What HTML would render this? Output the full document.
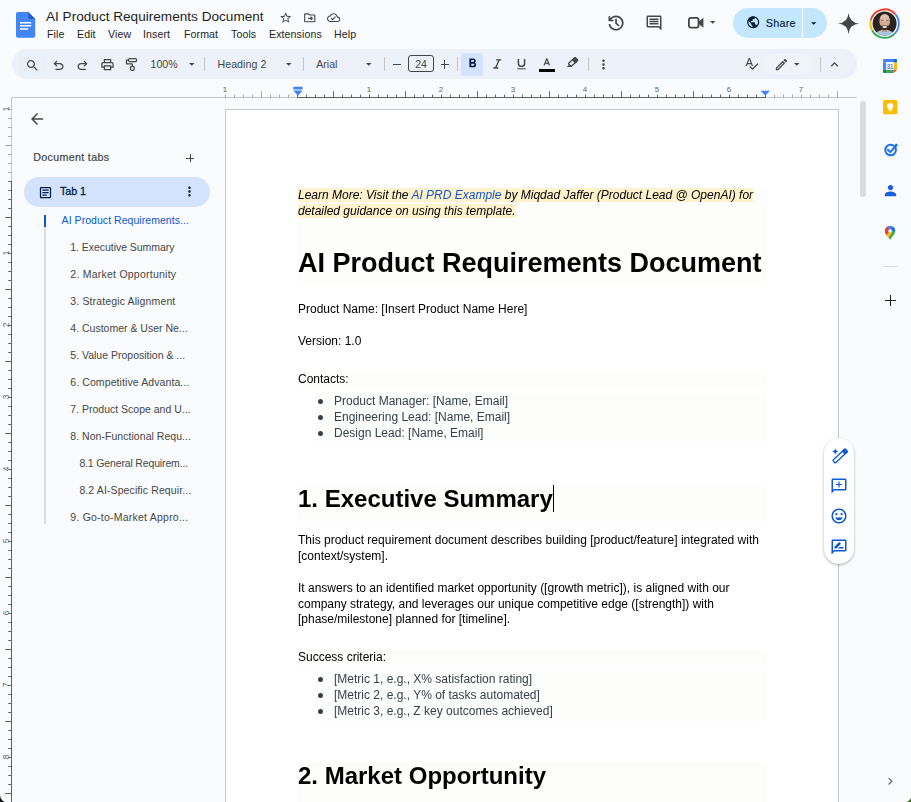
<!DOCTYPE html>
<html>
<head>
<meta charset="utf-8">
<title>AI Product Requirements Document</title>
<style>
*{box-sizing:border-box;margin:0;padding:0}
html,body{width:911px;height:802px;overflow:hidden;background:#f9fbfd;font-family:"Liberation Sans",sans-serif;color:#1f1f1f}
.abs{position:absolute}
#app{position:relative;width:911px;height:802px;overflow:hidden;background:#f9fbfd}
/* header */
#title{left:46px;top:8px;font-size:13.6px;line-height:18px;color:#1f1f1f;white-space:nowrap}
.menu{letter-spacing:.1px;top:27px;font-size:10.6px;line-height:14px;color:#1f1f1f;white-space:nowrap}
/* toolbar */
#tb{left:12px;top:48.800px;width:845px;height:30px;border-radius:15px;background:#edf2fa}
.tbt{font-size:10.6px;line-height:14px;top:57px;color:#444746;white-space:nowrap}
.sep{width:1px;height:15px;top:56px;background:#c7c7c7}
svg{position:absolute;overflow:visible}
.rn{top:85.300px;width:20px;text-align:center;font-size:7.900px;line-height:9px;color:#5f6368}
.vn{left:.500px;width:9px;height:10px;text-align:center;font-size:8.400px;line-height:10px;color:#5f6368;transform:rotate(-90deg)}
/* sidebar */
.ol{font-size:10.5px;line-height:14px;color:#444746;white-space:nowrap}
/* page */
#page{left:225px;top:109px;width:614px;height:700px;background:#fff;border:1px solid #c8c8c8}
#doc{position:absolute;left:0;top:0;width:911px;height:802px;will-change:transform}
.p{left:298px;font-size:12px;line-height:16px;color:#000;white-space:nowrap}
.li{left:334px;font-size:12px;line-height:16px;color:#35404f;white-space:nowrap}
.bul{left:317.5px;width:5px;height:5px;border-radius:50%;background:#35404f}
.fb{background:#fdfdfb}
.hl{background:#fff2cc}
.lk{color:#1155cc}
.h2{left:298px;font-size:24px;font-weight:700;line-height:30px;color:#000;white-space:nowrap}
</style>
</head>
<body>
<div id="app">

<!-- HEADER -->
<div id="hdr">
<svg style="left:16px;top:11.6px" width="19.2" height="25.7" viewBox="0 0 19.2 25.7"><path fill="#4285f4" d="M1.800 0H12.200L19.200 7V23.900a1.800 1.800 0 0 1-1.800 1.800H1.800A1.800 1.800 0 0 1 0 23.900V1.800A1.800 1.800 0 0 1 1.800 0z"/><path fill="#1a5fd0" d="M12.200 0L19.200 7H13.600a1.400 1.400 0 0 1-1.400-1.400z"/><path fill="#fff" d="M4 10.100h11.200v1.500H4zM4 13h11.200v1.500H4zM4 16.200h8.200v1.500H4z"/></svg>
<div id="title" class="abs">AI Product Requirements Document</div>
<svg style="left:278.8px;top:10.6px" width="13.5" height="13.5" viewBox="0 0 24 24"><path fill="#444746"  d="M22 9.24l-7.19-.62L12 2 9.19 8.63 2 9.24l5.46 4.73L5.82 21 12 17.27 18.18 21l-1.63-7.03L22 9.24zM12 15.4l-3.76 2.27 1-4.28-3.32-2.88 4.38-.38L12 6.1l1.71 4.04 4.38.38-3.32 2.88 1 4.28L12 15.4z"/></svg>
<svg style="left:302.6px;top:11.2px" width="13.5" height="13.5" viewBox="0 0 24 24"><path fill="#444746"  d="M20 6h-8l-2-2H4c-1.1 0-2 .9-2 2v12c0 1.1.9 2 2 2h16c1.1 0 2-.9 2-2V8c0-1.1-.9-2-2-2zm0 12H4V6h5.17l2 2H20v10zm-7.16-2.59L14.25 16.83 18 13l-3.75-3.83-1.41 1.42L14.25 12H9v2h5.25l-1.41 1.41z"/></svg>
<svg style="left:327px;top:11px" width="13.3" height="13.3" viewBox="0 0 24 24"><path fill="#444746"  d="M19.35 10.04C18.67 6.59 15.64 4 12 4 9.11 4 6.6 5.64 5.35 8.04 2.34 8.36 0 10.91 0 14c0 3.31 2.69 6 6 6h13c2.76 0 5-2.24 5-5 0-2.64-2.05-4.78-4.65-4.96zM19 18H6c-2.21 0-4-1.79-4-4 0-2.05 1.53-3.76 3.56-3.97l1.07-.11.5-.95C8.08 7.14 9.94 6 12 6c2.62 0 4.88 1.86 5.39 4.43l.3 1.5 1.53.11c1.56.1 2.78 1.41 2.78 2.96 0 1.65-1.35 3-3 3zm-9-3.82l-2.09-2.09L6.5 13.5 10 17l6.01-6.01-1.41-1.41z"/></svg>
<div class="abs menu" style="left:47px">File</div>
<div class="abs menu" style="left:77px">Edit</div>
<div class="abs menu" style="left:108px">View</div>
<div class="abs menu" style="left:143px">Insert</div>
<div class="abs menu" style="left:184px">Format</div>
<div class="abs menu" style="left:231px">Tools</div>
<div class="abs menu" style="left:269px">Extensions</div>
<div class="abs menu" style="left:334px">Help</div>
<svg style="left:606.300px;top:12.800px" width="20.100" height="20.100" viewBox="0 0 24 24"><path fill="#444746" d="M12 21q-3.450 0-6.013-2.287Q3.425 16.425 3.050 13H5.100q.350 2.600 2.313 4.300Q9.375 19 12 19q2.925 0 4.963-2.037Q19 14.925 19 12t-2.037-4.963Q14.925 5 12 5q-1.725 0-3.225.800-1.500.800-2.525 2.200H9v2H3V4h2v2.350q1.275-1.600 3.113-2.475Q9.950 3 12 3q1.875 0 3.513.713 1.637.712 2.850 1.925 1.212 1.212 1.925 2.850Q21 10.125 21 12t-.712 3.512q-.713 1.638-1.925 2.850-1.213 1.213-2.850 1.926Q13.875 21 12 21Zm2.800-4.800L11 12.400V7h2v4.600l3.200 3.200Z"/></svg>
<svg style="left:644.6px;top:13.8px" width="18" height="18" viewBox="0 0 24 24"><path fill="#444746"  d="M21.990 4c0-1.100-.890-2-1.990-2H4c-1.100 0-2 .900-2 2v12c0 1.100.900 2 2 2h14l4 4-.010-18zM20 4v13.170L18.830 16H4V4h16zM6 12h12v2H6zm0-3h12v2H6zm0-3h12v2H6z"/></svg>
<svg style="left:687.9px;top:16.6px" width="15.4" height="11.5" viewBox="0 0 15.4 11.5"><rect x=".9" y=".9" width="9.600" height="9.700" rx="1.800" fill="none" stroke="#444746" stroke-width="1.800"/><path fill="#444746" d="M10.800 4.600L15.400 .800V10.700L10.800 6.900z"/></svg>
<svg style="left:710.3px;top:20.7px" width="5.4" height="2.800" viewBox="0 0 10 5"><path fill="#444746" d="M0 0h10L5 5z"/></svg>
<div class="abs" style="left:732.8px;top:7.8px;width:94.3px;height:30px;border-radius:15px;background:#c2e7ff"></div>
<div class="abs" style="left:801.8px;top:7.8px;width:1px;height:30px;background:#f9fbfd"></div>
<svg style="left:746.2px;top:14.8px" width="14.4" height="14.4" viewBox="0 0 24 24"><path fill="#001d35"  d="M12 2C6.480 2 2 6.480 2 12s4.480 10 10 10 10-4.480 10-10S17.520 2 12 2zm-1 17.930c-3.950-.490-7-3.850-7-7.930 0-.620.080-1.210.210-1.790L9 15v1c0 1.100.900 2 2 2v1.930zm6.900-2.540c-.260-.810-1-1.390-1.900-1.390h-1v-3c0-.550-.450-1-1-1H8v-2h2c.550 0 1-.450 1-1V7h2c1.100 0 2-.900 2-2v-.410c2.930 1.190 5 4.060 5 7.410 0 2.080-.800 3.970-2.100 5.390z"/></svg>
<div class="abs" id="share" style="left:765.8px;top:15.5px;font-size:10.8px;line-height:14px;color:#001d35;letter-spacing:.25px;-webkit-text-stroke:.12px #001d35;white-space:nowrap">Share</div>
<svg style="left:811.2px;top:21.8px" width="5.4" height="3" viewBox="0 0 10 5"><path fill="#001d35" d="M0 0h10L5 5z"/></svg>
<svg style="left:837.900px;top:12.800px" width="21.200" height="21.200" viewBox="-10.600 -10.600 21.200 21.200"><path fill="#444746" d="M0-10.600Q.900-.900 10.600 0Q.900 .900 0 10.600Q-.900 .900-10.600 0Q-.900-.900 0-10.600z"/><circle r="2.700" fill="#444746"/></svg>
<svg style="left:868.900px;top:7.700px" width="31.200" height="31.200" viewBox="-15.600 -15.600 31.200 31.200">
<g fill="none" stroke-width="1.800">
<path stroke="#ea4335" d="M-13.94 -2.96A14.25 14.25 0 0 1 10.92 -9.16"/>
<path stroke="#4285f4" d="M10.92 -9.16A14.25 14.25 0 0 1 9.72 10.42"/>
<path stroke="#34a853" d="M9.72 10.42A14.25 14.25 0 0 1 -12.58 6.69"/>
<path stroke="#fbbc04" d="M-12.58 6.69A14.25 14.25 0 0 1 -13.94 -2.96"/>
</g>
<circle r="12" fill="#2a2422"/>
<clipPath id="avc"><circle r="12"/></clipPath>
<g clip-path="url(#avc)">
<path d="M-9.500 12.500C-8.500 7.500-4 6.200 0 6.200S8.500 7.500 9.500 12.500z" fill="#a9c4e3"/>
<path d="M-2.600 4h5.200v4.200h-5.200z" fill="#b98a72"/>
<ellipse cx=".100" cy="-2.200" rx="5.300" ry="7.300" fill="#d4aa92"/>
<ellipse cx=".100" cy="-5.600" rx="4.300" ry="3.600" fill="#e2bfa8"/>
<path d="M-5.100 0.300C-5.100 8.600 5.300 8.600 5.300 0.300 4.300 2.600 2.600 2 .100 2S-4.100 2.600-5.100 .300z" fill="#3b2a22"/>
<ellipse cx=".100" cy="3.400" rx="2.300" ry=".900" fill="#f3ece8"/>
<path d="M-3.600-3.300h2.400M1.400-3.300h2.400" stroke="#5a4034" stroke-width=".700" fill="none"/>
</g></svg>
</div>

<!-- TOOLBAR -->
<div id="tb" class="abs"></div>
<div id="tbi">
<div class="abs" style="left:19px;top:54px;width:28px;height:20.500px;background:#eaf0f9"></div>
<svg style="left:25.2px;top:57.5px" width="15" height="15" viewBox="0 0 24 24"><path fill="#444746"  d="M15.500 14h-.790l-.280-.270C15.410 12.590 16 11.110 16 9.500 16 5.910 13.090 3 9.500 3S3 5.910 3 9.500 5.910 16 9.500 16c1.610 0 3.090-.590 4.230-1.570l.270.280v.790l5 4.990L20.490 19l-4.990-5zm-6 0C7.010 14 5 11.990 5 9.500S7.010 5 9.500 5 14 7.010 14 9.500 11.990 14 9.500 14z"/></svg>
<svg style="left:51px;top:58px" width="15" height="15" viewBox="0 0 24 24"><path fill="#444746"  d="M7 19v-2h7.100q1.575 0 2.737-1Q18 15 18 13.500T16.837 11Q15.675 10 14.100 10H7.800l2.600 2.600L9 14 4 9l5-5 1.400 1.400L7.800 8h6.300q2.425 0 4.163 1.575Q20 11.150 20 13.500q0 2.350-1.737 3.925Q16.525 19 14.100 19Z"/></svg>
<svg style="left:75.1px;top:58px" width="15" height="15" viewBox="0 0 24 24"><path fill="#444746"  d="M9.900 19q-2.425 0-4.163-1.575Q4 15.850 4 13.500q0-2.350 1.737-3.925Q7.475 8 9.900 8h6.300l-2.600-2.600L15 4l5 5-5 5-1.400-1.400 2.600-2.600H9.900q-1.575 0-2.737 1Q6 12 6 13.500T7.163 16q1.162 1 2.737 1H17v2Z"/></svg>
<svg style="left:99.8px;top:57px" width="15" height="15" viewBox="0 0 24 24"><path fill="#444746"  d="M19 8h-1V3H6v5H5c-1.660 0-3 1.340-3 3v6h4v4h12v-4h4v-6c0-1.660-1.340-3-3-3zM8 5h8v3H8V5zm8 14H8v-4h8v4zm2-4v-2H6v2H4v-4c0-.550.450-1 1-1h14c.550 0 1 .450 1 1v4h-2z"/></svg>
<svg style="left:124px;top:56px" width="16" height="16" viewBox="124 56 16 16"><g fill="none" stroke="#444746" stroke-width="1.250" stroke-linejoin="round"><rect x="128.600" y="58.500" width="7.900" height="3" rx=".900"/><path d="M128.600 60H126.500V63.800H132.300V66.200"/><rect x="130.500" y="66.300" width="3.700" height="4.100" rx="1.300"/></g></svg>
<div class="abs tbt" style="left:150.5px">100%</div>
<svg style="left:188.9px;top:63.3px" width="5.500" height="2.800" viewBox="0 0 10 5"><path fill="#444746" d="M0 0h10L5 5z"/></svg>
<div class="abs" style="left:204px;top:56.7px;width:1px;height:14.2px;background:#c7c7c7"></div>
<div class="abs tbt" style="left:217.400px;letter-spacing:.1px">Heading 2</div>
<svg style="left:286px;top:63.3px" width="5.500" height="2.800" viewBox="0 0 10 5"><path fill="#444746" d="M0 0h10L5 5z"/></svg>
<div class="abs" style="left:303px;top:56.7px;width:1px;height:14.2px;background:#c7c7c7"></div>
<div class="abs tbt" style="left:316.200px">Arial</div>
<svg style="left:365.8px;top:63.3px" width="5.500" height="2.800" viewBox="0 0 10 5"><path fill="#444746" d="M0 0h10L5 5z"/></svg>
<div class="abs" style="left:384px;top:56.7px;width:1px;height:14.2px;background:#c7c7c7"></div>
<div class="abs" style="left:392.600px;top:63.800px;width:8px;height:1.100px;background:#444746"></div>
<div class="abs" style="left:408.200px;top:55.100px;width:25.800px;height:17.400px;border:1px solid #444746;border-radius:3px"></div>
<div class="abs tbt" style="left:408.200px;width:25.800px;text-align:center">24</div>
<div class="abs" style="left:440.600px;top:63.700px;width:8.400px;height:1.100px;background:#444746"></div>
<div class="abs" style="left:444.250px;top:60px;width:1.100px;height:8.500px;background:#444746"></div>
<div class="abs" style="left:457.3px;top:56.7px;width:1px;height:14.2px;background:#c7c7c7"></div>
<div class="abs" style="left:460.900px;top:52.700px;width:22.600px;height:22.900px;border-radius:3px;background:#d3e3fd"></div>
<svg style="left:465.3px;top:56.2px" width="15" height="15" viewBox="0 0 24 24"><path fill="#041e49"  d="M15.600 10.790c.970-.670 1.650-1.770 1.650-2.790 0-2.260-1.750-4-4-4H7v14h7.040c2.090 0 3.710-1.700 3.710-3.790 0-1.520-.860-2.820-2.150-3.420zM10 6.500h3c.830 0 1.500.670 1.500 1.500s-.670 1.500-1.500 1.500h-3v-3zm3.500 9H10v-3h3.500c.830 0 1.500.670 1.500 1.500s-.670 1.500-1.500 1.500z"/></svg>
<svg style="left:490px;top:56px" width="16" height="16" viewBox="490 56 16 16"><g fill="none" stroke="#444746" stroke-width="1.300"><path d="M496.200 59.900H501.200M493.300 68H498.300M499.100 59.900L495.500 68"/></g></svg>
<svg style="left:514px;top:56px" width="16" height="16" viewBox="514 56 16 16"><g fill="none" stroke="#444746"><path stroke-width="1.500" d="M518.400 58.900V63.300A3.100 3.100 0 0 0 524.600 63.300V58.900"/><path stroke-width="1" d="M517.400 68.800H525.600"/></g></svg>
<svg style="left:540.900px;top:57.100px" width="11.600" height="11.600" viewBox="0 0 24 24"><path fill="#444746" stroke="#444746" stroke-width=".600" d="M11 3L5.500 17h2.250l1.120-3h6.250l1.120 3h2.250L13 3h-2zm-1.380 9L12 5.670 14.380 12H9.620z"/></svg>
<div class="abs" style="left:538.900px;top:69px;width:16.300px;height:2.700px;background:#000"></div>
<svg style="left:564px;top:55px" width="16" height="16" viewBox="564 55 16 16"><g transform="translate(572.900,62.100) rotate(-42)"><rect x="-4.500" y="-2" width="9.300" height="4" rx=".900" fill="none" stroke="#444746" stroke-width="1.250"/><rect x=".600" y="-2.500" width="4.800" height="5" rx="1" fill="#444746"/></g><path fill="#444746" d="M566.900 67L569.500 64.300 572.300 66.600 571.500 67z"/></svg>
<div class="abs" style="left:588.3px;top:56.7px;width:1px;height:14.2px;background:#c7c7c7"></div>
<svg style="left:596.4px;top:57.1px" width="15" height="15" viewBox="0 0 24 24"><path fill="#444746"  d="M12 8c1.100 0 2-.900 2-2s-.900-2-2-2-2 .900-2 2 .900 2 2 2zm0 2c-1.100 0-2 .900-2 2s.900 2 2 2 2-.900 2-2-.900-2-2-2zm0 6c-1.100 0-2 .900-2 2s.900 2 2 2 2-.900 2-2-.900-2-2-2z"/></svg>
<svg style="left:743.6px;top:56.2px" width="15" height="15" viewBox="0 0 24 24"><path fill="#444746"  d="M12.450 16h2.090L9.430 3H7.570L2.460 16h2.090l1.120-3h5.640l1.140 3zm-6.020-5L8.500 5.480 10.570 11H6.430zm15.160.590l-8.090 8.090L9.830 16l-1.410 1.410 5.090 5.090L23 13l-1.410-1.410z"/></svg>
<div class="abs" style="left:764px;top:52.800px;width:48.200px;height:22.600px;border-radius:11.300px;background:#f0f4fa"></div>
<svg style="left:773.6px;top:56.6px" width="15" height="15" viewBox="0 0 24 24"><path fill="#444746"  d="M3 17.250V21h3.750L17.810 9.940l-3.750-3.750L3 17.250zM5.920 19H5v-.920l9.060-9.060.920.920L5.920 19zM20.710 5.630l-2.340-2.340c-.200-.200-.450-.290-.710-.290s-.510.100-.700.290l-1.830 1.830 3.750 3.750 1.830-1.830c.390-.390.390-1.020 0-1.410z"/></svg>
<svg style="left:794.4px;top:62.9px" width="5.500" height="2.800" viewBox="0 0 10 5"><path fill="#444746" d="M0 0h10L5 5z"/></svg>
<div class="abs" style="left:820.3px;top:57px;width:1px;height:14.7px;background:#c7c7c7"></div>
<svg style="left:827.4px;top:56.7px" width="15" height="15" viewBox="0 0 24 24"><path fill="#444746"  d="M12 8l-6 6 1.410 1.410L12 10.830l4.590 4.580L18 14z"/></svg>
</div>

<!-- RULERS -->
<div id="rulers">
<svg style="left:0;top:0" width="911" height="110"><path d="M11 97.500H857" stroke="#c4c7c5" stroke-width="1" fill="none"/><path d="M297 97.500H766" stroke="#5f6368" stroke-width="1" fill="none"/><path d="M225.5 94.6V97.500M234.5 94.6V97.500M243.5 94.6V97.500M252.5 94.6V97.500M261.5 91.2V97.500M270.5 94.6V97.500M279.5 94.6V97.500M288.5 94.6V97.500M774.5 94.6V97.500M783.5 94.6V97.500M792.5 94.6V97.500M801.5 94.6V97.500M810.5 94.6V97.500M819.5 94.6V97.500M828.5 94.6V97.500M837.5 91.2V97.500" stroke="#a4a7a5" stroke-width="1" fill="none"/><path d="M297.5 94.6V97.500M306.5 94.6V97.500M315.5 94.6V97.500M324.5 94.6V97.500M333.5 91.2V97.500M342.5 94.6V97.500M351.5 94.6V97.500M360.5 94.6V97.500M369.5 94.6V97.500M378.5 94.6V97.500M387.5 94.6V97.500M396.5 94.6V97.500M405.5 91.2V97.500M414.5 94.6V97.500M423.5 94.6V97.500M432.5 94.6V97.500M441.5 94.6V97.500M450.5 94.6V97.500M459.5 94.6V97.500M468.5 94.6V97.500M477.5 91.2V97.500M486.5 94.6V97.500M495.5 94.6V97.500M504.5 94.6V97.500M513.5 94.6V97.500M522.5 94.6V97.500M531.5 94.6V97.500M540.5 94.6V97.500M549.5 91.2V97.500M558.5 94.6V97.500M567.5 94.6V97.500M576.5 94.6V97.500M585.5 94.6V97.500M594.5 94.6V97.500M603.5 94.6V97.500M612.5 94.6V97.500M621.5 91.2V97.500M630.5 94.6V97.500M639.5 94.6V97.500M648.5 94.6V97.500M657.5 94.6V97.500M666.5 94.6V97.500M675.5 94.6V97.500M684.5 94.6V97.500M693.5 91.2V97.500M702.5 94.6V97.500M711.5 94.6V97.500M720.5 94.6V97.500M729.5 94.6V97.500M738.5 94.6V97.500M747.5 94.6V97.500M756.5 94.6V97.500M765.5 91.2V97.500" stroke="#5f6368" stroke-width="1" fill="none"/><path fill="#4285f4" d="M293.300 86.700h9.300v2.700h-9.300zM293.300 90.400h9.300L298 95.700z"/><path fill="#4285f4" d="M760.700 90.800h9.200L765.300 95.800z"/></svg>
<div class="abs rn" style="left:215px">1</div>
<div class="abs rn" style="left:359px">1</div>
<div class="abs rn" style="left:431px">2</div>
<div class="abs rn" style="left:503px">3</div>
<div class="abs rn" style="left:575px">4</div>
<div class="abs rn" style="left:647px">5</div>
<div class="abs rn" style="left:719px">6</div>
<div class="abs rn" style="left:791px">7</div>
<svg style="left:0;top:0" width="14" height="802"><path d="M11.500 97V181" stroke="#c4c7c5" stroke-width="1" fill="none"/><path d="M11.500 181V802" stroke="#5f6368" stroke-width="1" fill="none"/><path d="M8.2 109.5H11.500M8.2 118.5H11.500M8.2 127.5H11.500M8.2 136.5H11.500M5.2 145.5H11.500M8.2 154.5H11.500M8.2 163.5H11.500M8.2 172.5H11.500" stroke="#a4a7a5" stroke-width="1" fill="none"/><path d="M8.2 181.5H11.500M8.2 190.5H11.500M8.2 199.5H11.500M8.2 208.5H11.500M5.2 217.5H11.500M8.2 226.5H11.500M8.2 235.5H11.500M8.2 244.5H11.500M8.2 253.5H11.500M8.2 262.5H11.500M8.2 271.5H11.500M8.2 280.5H11.500M5.2 289.5H11.500M8.2 298.5H11.500M8.2 307.5H11.500M8.2 316.5H11.500M8.2 325.5H11.500M8.2 334.5H11.500M8.2 343.5H11.500M8.2 352.5H11.500M5.2 361.5H11.500M8.2 370.5H11.500M8.2 379.5H11.500M8.2 388.5H11.500M8.2 397.5H11.500M8.2 406.5H11.500M8.2 415.5H11.500M8.2 424.5H11.500M5.2 433.5H11.500M8.2 442.5H11.500M8.2 451.5H11.500M8.2 460.5H11.500M8.2 469.5H11.500M8.2 478.5H11.500M8.2 487.5H11.500M8.2 496.5H11.500M5.2 505.5H11.500M8.2 514.5H11.500M8.2 523.5H11.500M8.2 532.5H11.500M8.2 541.5H11.500M8.2 550.5H11.500M8.2 559.5H11.500M8.2 568.5H11.500M5.2 577.5H11.500M8.2 586.5H11.500M8.2 595.5H11.500M8.2 604.5H11.500M8.2 613.5H11.500M8.2 622.5H11.500M8.2 631.5H11.500M8.2 640.5H11.500M5.2 649.5H11.500M8.2 658.5H11.500M8.2 667.5H11.500M8.2 676.5H11.500M8.2 685.5H11.500M8.2 694.5H11.500M8.2 703.5H11.500M8.2 712.5H11.500M5.2 721.5H11.500M8.2 730.5H11.500M8.2 739.5H11.500M8.2 748.5H11.500M8.2 757.5H11.500M8.2 766.5H11.500M8.2 775.5H11.500M8.2 784.5H11.500M5.2 793.5H11.500M8.2 802.5H11.500" stroke="#5f6368" stroke-width="1" fill="none"/></svg>
<div class="abs vn" style="top:104.0px">1</div>
<div class="abs vn" style="top:248.0px">1</div>
<div class="abs vn" style="top:320.0px">2</div>
<div class="abs vn" style="top:392.0px">3</div>
<div class="abs vn" style="top:464.0px">4</div>
<div class="abs vn" style="top:536.0px">5</div>
<div class="abs vn" style="top:608.0px">6</div>
<div class="abs vn" style="top:680.0px">7</div>
<div class="abs vn" style="top:752.0px">8</div>
<svg style="left:0;top:794.500px" width="7.500" height="7.500" viewBox="0 0 10 10"><path fill="#111" d="M0 0V10H10A10 10 0 0 1 0 0z"/></svg>
<svg style="left:903.500px;top:794.500px" width="7.500" height="7.500" viewBox="0 0 10 10"><path fill="#3f6b1e" d="M10 0V10H0A10 10 0 0 0 10 0z"/></svg>
</div>

<!-- SIDEBAR -->
<div id="sidec">
<svg style="left:28.3px;top:110.2px" width="18" height="18" viewBox="0 0 24 24"><path fill="#444746"  d="M20 11H7.830l5.590-5.590L12 4l-8 8 8 8 1.410-1.410L7.830 13H20v-2z"/></svg>
<div class="abs" style="left:33.200px;top:150.200px;font-size:10.700px;line-height:14px;color:#444746;letter-spacing:.33px;-webkit-text-stroke:.2px #444746;white-space:nowrap">Document tabs</div>
<div class="abs" style="left:185.800px;top:157.600px;width:8.500px;height:1.100px;background:#444746"></div><div class="abs" style="left:189.500px;top:153.900px;width:1.100px;height:8.500px;background:#444746"></div>
<div class="abs" style="left:24px;top:177.100px;width:186px;height:29.700px;border-radius:15px;background:#d3e3fd"></div>
<svg style="left:37.6px;top:184.6px" width="15" height="15" viewBox="0 0 24 24"><path fill="#041e49"  d="M19 5v14H5V5h14m0-2H5c-1.100 0-2 .900-2 2v14c0 1.100.900 2 2 2h14c1.100 0 2-.900 2-2V5c0-1.100-.900-2-2-2zM14 17H7v-2h7v2zm3-4H7v-2h10v2zm0-4H7V7h10v2z"/></svg>
<div class="abs" style="left:60px;top:184.200px;font-size:10.700px;line-height:14px;color:#041e49;letter-spacing:-.05px;-webkit-text-stroke:.3px #041e49;white-space:nowrap">Tab 1</div>
<svg style="left:182.4px;top:184.4px" width="15" height="15" viewBox="0 0 24 24"><path fill="#041e49"  d="M12 8c1.100 0 2-.900 2-2s-.900-2-2-2-2 .900-2 2 .900 2 2 2zm0 2c-1.100 0-2 .900-2 2s.900 2 2 2 2-.900 2-2-.900-2-2-2zm0 6c-1.100 0-2 .900-2 2s.900 2 2 2 2-.900 2-2-.900-2-2-2z"/></svg>
<div class="abs" style="left:44.200px;top:227px;width:1.800px;height:296.500px;background:#dadce0"></div>
<div class="abs" style="left:43.900px;top:215px;width:2.200px;height:12px;background:#0b57d0"></div>
<div class="abs ol" style="left:61.6px;top:212.7px;color:#0b57d0;letter-spacing:0.048px">AI Product Requirements...</div>
<div class="abs ol" style="left:70.3px;top:239.7px;letter-spacing:-0.047px">1. Executive Summary</div>
<div class="abs ol" style="left:70.3px;top:266.7px;letter-spacing:0.24px">2. Market Opportunity</div>
<div class="abs ol" style="left:70.3px;top:293.7px;letter-spacing:0.135px">3. Strategic Alignment</div>
<div class="abs ol" style="left:70.3px;top:320.7px">4. Customer &amp; User Ne...</div>
<div class="abs ol" style="left:70.3px;top:347.7px">5. Value Proposition &amp; ...</div>
<div class="abs ol" style="left:70.3px;top:374.7px;letter-spacing:0.095px">6. Competitive Advanta...</div>
<div class="abs ol" style="left:70.3px;top:401.7px">7. Product Scope and U...</div>
<div class="abs ol" style="left:70.3px;top:428.7px;letter-spacing:0.042px">8. Non-Functional Requ...</div>
<div class="abs ol" style="left:79.4px;top:455.7px;letter-spacing:-0.151px">8.1 General Requirem...</div>
<div class="abs ol" style="left:79.4px;top:482.7px;letter-spacing:0.11px">8.2 AI-Specific Requir...</div>
<div class="abs ol" style="left:70.3px;top:509.7px;letter-spacing:0.227px">9. Go-to-Market Appro...</div>
</div>

<!-- PAGE -->
<div id="page" class="abs"></div>
<div id="doc">
<div class="abs fb" style="left:298px;top:186.7px;width:468px;height:97.0px"></div>
<div class="abs fb" style="left:298px;top:371.6px;width:468px;height:16.7px"></div>
<div class="abs fb" style="left:316px;top:392.8px;width:450px;height:49.0px"></div>
<div class="abs fb" style="left:298px;top:484.8px;width:468px;height:36.9px"></div>
<div class="abs fb" style="left:298px;top:649.7px;width:468px;height:16.7px"></div>
<div class="abs fb" style="left:316px;top:672px;width:450px;height:48.8px"></div>
<div class="abs fb" style="left:298px;top:761.7px;width:468px;height:40.3px"></div>
<div class="abs p" style="top:187px;font-style:italic"><span class="hl">Learn More: Visit the <span class="lk">AI PRD Example</span> by Miqdad Jaffer (Product Lead @ OpenAI) for</span></div>
<div class="abs p" style="top:203px;font-style:italic"><span class="hl">detailed guidance on using this template.</span></div>
<div class="abs" id="doctitle" style="left:298px;top:243px;font-size:27px;font-weight:700;line-height:40px;color:#000;white-space:nowrap">AI Product Requirements Document</div>
<div class="abs p" style="top:301px">Product Name: [Insert Product Name Here]</div>
<div class="abs p" style="top:333px">Version: 1.0</div>
<div class="abs p" style="top:371px">Contacts:</div>
<div class="abs bul" style="top:398.80px"></div>
<div class="abs li" style="top:393px">Product Manager: [Name, Email]</div>
<div class="abs bul" style="top:414.80px"></div>
<div class="abs li" style="top:409px">Engineering Lead: [Name, Email]</div>
<div class="abs bul" style="top:430.80px"></div>
<div class="abs li" style="top:425px">Design Lead: [Name, Email]</div>
<div class="abs h2" style="top:484px">1. Executive Summary</div>
<div class="abs" style="left:553px;top:485px;width:1px;height:27px;background:#000"></div>
<div class="abs p" style="top:532px">This product requirement document describes building [product/feature] integrated with</div>
<div class="abs p" style="top:548px">[context/system].</div>
<div class="abs p" style="top:580px">It answers to an identified market opportunity ([growth metric]), is aligned with our</div>
<div class="abs p" style="top:596px">company strategy, and leverages our unique competitive edge ([strength]) with</div>
<div class="abs p" style="top:611px">[phase/milestone] planned for [timeline].</div>
<div class="abs p" style="top:649px">Success criteria:</div>
<div class="abs bul" style="top:676.80px"></div>
<div class="abs li" style="top:671px">[Metric 1, e.g., X% satisfaction rating]</div>
<div class="abs bul" style="top:692.80px"></div>
<div class="abs li" style="top:687px">[Metric 2, e.g., Y% of tasks automated]</div>
<div class="abs bul" style="top:708.80px"></div>
<div class="abs li" style="top:703px">[Metric 3, e.g., Z key outcomes achieved]</div>
<div class="abs h2" style="top:761px">2. Market Opportunity</div>
</div>


<!-- RIGHT PANEL -->
<div id="rp">
<div class="abs" style="left:860.300px;top:100.800px;width:5.600px;height:96px;border-radius:2.800px;background:#dadce0"></div>
<svg style="left:883.200px;top:58.500px" width="14" height="14" viewBox="0 0 14 14"><path fill="#4285f4" d="M1.200 0h11.600A1.200 1.200 0 0 1 14 1.200V3.300H0V1.200A1.200 1.200 0 0 1 1.200 0z"/><path fill="#4285f4" d="M0 3.300h3.300v7.400H0z"/><path fill="#fbbc04" d="M10.700 3.300H14v7.400h-3.300z"/><path fill="#34a853" d="M3.300 10.700h7.400V14H3.300z"/><path fill="#188038" d="M0 10.700h3.300V14H1.200A1.200 1.200 0 0 1 0 12.800z"/><path fill="#ea4335" d="M10.700 10.700H14L10.700 14z"/><path fill="#1967d2" d="M10.700 0h2.100A1.200 1.200 0 0 1 14 1.200V3.300h-3.300z"/><rect x="3.300" y="3.300" width="7.400" height="7.400" fill="#fff"/><text x="6.900" y="9.500" font-family="Liberation Sans" font-size="6.600" font-weight="700" fill="#4285f4" text-anchor="middle" letter-spacing="-.4">31</text></svg>
<svg style="left:883.300px;top:100.400px" width="14.400" height="14.200" viewBox="0 0 14.400 14.200"><rect width="14.400" height="14.200" rx="1.600" fill="#fbbc04"/><circle cx="7.200" cy="6.100" r="3.100" fill="#fff"/><rect x="5.700" y="8.300" width="3" height="2.900" fill="#fff"/><rect x="5.900" y="10.100" width="2.600" height=".500" fill="#fbbc04" opacity=".5"/></svg>
<svg style="left:883.800px;top:143px" width="14" height="13.400" viewBox="0 0 14 13.400"><circle cx="6.600" cy="7" r="5.300" fill="none" stroke="#1a73e8" stroke-width="2"/><path d="M3.900 6.800L6.200 9.100 12.600 2" fill="none" stroke="#1a73e8" stroke-width="2" stroke-linecap="round" stroke-linejoin="round"/><circle cx="12.300" cy="2" r="1.300" fill="#1a73e8"/></svg>
<svg style="left:883.2px;top:183.4px" width="15" height="15" viewBox="0 0 24 24"><path fill="#1a5fe0"  d="M12 11.500c2.350 0 4.250-1.900 4.250-4.250S14.350 3 12 3 7.750 4.900 7.750 7.250 9.650 11.500 12 11.500zm0 2c-3.200 0-9 1.500-9 4.700V21h18v-2.800c0-3.200-5.800-4.700-9-4.700z"/></svg>
<svg style="left:885.400px;top:226px" width="10.200" height="14" viewBox="0 0 10.200 14"><clipPath id="pin"><path d="M5.100 0C2.300 0 0 2.200 0 5c0 3.400 4 6.300 5.100 9C6.200 11.300 10.200 8.400 10.200 5 10.200 2.200 7.900 0 5.100 0z"/></clipPath><g clip-path="url(#pin)"><rect width="10.200" height="14" fill="#34a853"/><path d="M0 0h5.100v5.100L0 10z" fill="#ea4335"/><path d="M0 0h10.200v3L5.100 5.100 2 0z" fill="#4285f4"/><path d="M0 0L5.100 5.100 1 10.500 0 10z" fill="#ea4335"/><path d="M5.100 5.100L0 10.800 3 12.500 7 7z" fill="#fbbc04"/><path d="M10.200 0v5L5.100 5.100 8 .800z" fill="#1a73e8"/></g><circle cx="5.100" cy="5" r="1.800" fill="#fff"/></svg>
<div class="abs" style="left:882.900px;top:265.800px;width:15.200px;height:1px;background:#dadce0"></div>
<div class="abs" style="left:885.400px;top:299.800px;width:10.600px;height:1.200px;background:#1f1f1f"></div><div class="abs" style="left:890.100px;top:295.100px;width:1.200px;height:10.600px;background:#1f1f1f"></div>
<svg style="left:883px;top:774.200px" width="14.600" height="14.600" viewBox="0 0 24 24"><path fill="#5f6368"  d="M10 6L8.590 7.410 13.170 12l-4.580 4.590L10 18l6-6z"/></svg>
<div class="abs" style="left:824px;top:438.100px;width:29.900px;height:125.600px;border-radius:15px;background:#fff;box-shadow:0 1px 3px rgba(60,64,67,.3),0 1px 2px rgba(60,64,67,.15)"></div>
<svg style="left:828px;top:446px" width="24" height="20" viewBox="828 446 24 20"><g transform="translate(840.100,456) rotate(-43)"><rect x="-8.400" y="-1.850" width="16.800" height="3.700" rx=".900" fill="none" stroke="#0f5bd3" stroke-width="1.350"/><rect x="4.300" y="-2.500" width="4.800" height="5" rx="1" fill="#0f5bd3"/></g><path fill="#0f5bd3" d="M835.300 448.100Q835.600 451.200 838.700 451.500Q835.600 451.800 835.300 454.900Q835 451.800 831.900 451.500Q835 451.200 835.300 448.100z"/><circle cx="835.300" cy="451.500" r="1.300" fill="#0f5bd3"/></svg>
<svg style="left:830.400px;top:477.200px" width="18" height="18" viewBox="0 0 24 24"><path fill="#0f5bd3" d="M2 4c0-1.100.900-2 2-2h16c1.100 0 2 .900 2 2v12c0 1.100-.900 2-2 2H6l-4 4V4zm2 13.170L5.170 16H20V4H4v13.170zM11.200 6h1.600v3.200H16v1.600h-3.200V14h-1.600v-3.200H8v-1.600h3.200z"/></svg>
<svg style="left:830.3px;top:506.9px" width="18" height="18" viewBox="0 0 24 24"><path fill="#0b57d0"  d="M15.500 11a1.500 1.500 0 1 0 0-3 1.500 1.500 0 0 0 0 3zM8.500 11a1.500 1.500 0 1 0 0-3 1.500 1.500 0 0 0 0 3zM12 17.500c2.330 0 4.310-1.460 5.110-3.500H6.890c.800 2.040 2.780 3.500 5.110 3.500zM11.990 2C6.470 2 2 6.480 2 12s4.470 10 9.990 10C17.520 22 22 17.520 22 12S17.520 2 11.990 2zM12 20c-4.420 0-8-3.580-8-8s3.580-8 8-8 8 3.580 8 8-3.580 8-8 8z"/></svg>
<svg style="left:830.4px;top:537.5px" width="18" height="18" viewBox="0 0 24 24"><path fill="#0b57d0"  d="M20 2H4c-1.100 0-1.990.900-1.990 2L2 22l4-4h14c1.100 0 2-.900 2-2V4c0-1.100-.900-2-2-2zm0 14H5.170L4 17.170V4h16v12zM10.500 14H18v-2h-5.500zM14.360 8.130c.200-.200.200-.510 0-.710l-1.770-1.770c-.200-.200-.510-.200-.710 0L6 11.530V14h2.470l5.890-5.870z"/></svg>
</div>

</div>
</body>
</html>
